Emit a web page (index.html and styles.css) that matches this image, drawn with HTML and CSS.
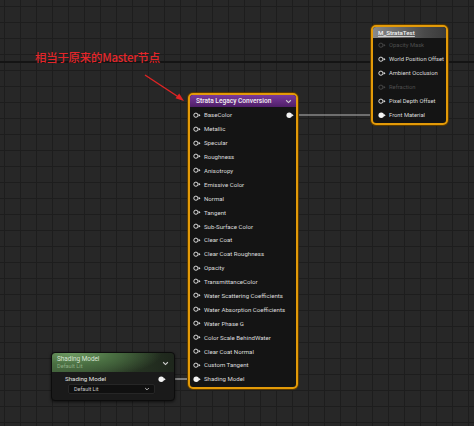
FILE: index.html
```html
<!DOCTYPE html>
<html>
<head>
<meta charset="utf-8">
<link rel="stylesheet" href="styles.css">
</head>
<body>
<svg class="defs" width="0" height="0">
  <defs>
    <symbol id="pin-o" viewBox="0 0 10 8">
      <circle cx="3.6" cy="4" r="2.6" fill="none" stroke="#e6e6e6" stroke-width="1.2"/>
      <path d="M7 2.2 L9.4 4 L7 5.8 Z" fill="#e6e6e6"/>
    </symbol>
    <symbol id="pin-dim" viewBox="0 0 10 8">
      <circle cx="3.6" cy="4" r="2.6" fill="none" stroke="#4a4a4a" stroke-width="1.2"/>
      <path d="M7 2.2 L9.4 4 L7 5.8 Z" fill="#4a4a4a"/>
    </symbol>
    <symbol id="pin-f" viewBox="0 0 10 8">
      <circle cx="4" cy="4" r="3.4" fill="#f4f4f4"/>
      <path d="M7 2.2 L9.6 4 L7 5.8 Z" fill="#f4f4f4"/>
    </symbol>
    <symbol id="chev" viewBox="0 0 8 6">
      <path d="M1.2 1.5 L4 4.3 L6.8 1.5" fill="none" stroke="#d0d0d0" stroke-width="1.3"/>
    </symbol>
  </defs>
</svg>

<div class="canvas">
  <svg class="wires" width="474" height="426">
    <line x1="290" y1="115" x2="382" y2="115" stroke="#b8b8b8" stroke-width="1.2"/>
    <line x1="168" y1="379" x2="192" y2="379" stroke="#b8b8b8" stroke-width="1.2"/>
    <line x1="145" y1="75" x2="180" y2="98" stroke="#e02424" stroke-width="1.4"/>
    <path d="M184 101 L175.5 98.2 L179.2 93.6 Z" fill="#e02424"/>
  </svg>

  <div class="note">相当于原来的Master节点</div>

  <div class="node node-main">
    <div class="head head-purple">
      <span class="title">Strata Legacy Conversion</span>
      <svg class="chev"><use href="#chev"/></svg>
    </div>
    <div class="rows rows-main">
      <div class="row"><svg class="pin"><use href="#pin-o"/></svg><span>BaseColor</span><svg class="pin pin-out"><use href="#pin-f"/></svg></div>
      <div class="row"><svg class="pin"><use href="#pin-o"/></svg><span>Metallic</span></div>
      <div class="row"><svg class="pin"><use href="#pin-o"/></svg><span>Specular</span></div>
      <div class="row"><svg class="pin"><use href="#pin-o"/></svg><span>Roughness</span></div>
      <div class="row"><svg class="pin"><use href="#pin-o"/></svg><span>Anisotropy</span></div>
      <div class="row"><svg class="pin"><use href="#pin-o"/></svg><span>Emissive Color</span></div>
      <div class="row"><svg class="pin"><use href="#pin-o"/></svg><span>Normal</span></div>
      <div class="row"><svg class="pin"><use href="#pin-o"/></svg><span>Tangent</span></div>
      <div class="row"><svg class="pin"><use href="#pin-o"/></svg><span>Sub-Surface Color</span></div>
      <div class="row"><svg class="pin"><use href="#pin-o"/></svg><span>Clear Coat</span></div>
      <div class="row"><svg class="pin"><use href="#pin-o"/></svg><span>Clear Coat Roughness</span></div>
      <div class="row"><svg class="pin"><use href="#pin-o"/></svg><span>Opacity</span></div>
      <div class="row"><svg class="pin"><use href="#pin-o"/></svg><span>TransmittanceColor</span></div>
      <div class="row"><svg class="pin"><use href="#pin-o"/></svg><span>Water Scattering Coefficients</span></div>
      <div class="row"><svg class="pin"><use href="#pin-o"/></svg><span>Water Absorption Coefficients</span></div>
      <div class="row"><svg class="pin"><use href="#pin-o"/></svg><span>Water Phase G</span></div>
      <div class="row"><svg class="pin"><use href="#pin-o"/></svg><span>Color Scale BehindWater</span></div>
      <div class="row"><svg class="pin"><use href="#pin-o"/></svg><span>Clear Coat Normal</span></div>
      <div class="row"><svg class="pin"><use href="#pin-o"/></svg><span>Custom Tangent</span></div>
      <div class="row"><svg class="pin"><use href="#pin-f"/></svg><span>Shading Model</span></div>
    </div>
  </div>

  <div class="node node-out">
    <div class="head head-grey">
      <span class="title title-ul">M_StrataTest</span>
    </div>
    <div class="rows rows-out">
      <div class="row dim"><svg class="pin"><use href="#pin-dim"/></svg><span>Opacity Mask</span></div>
      <div class="row"><svg class="pin"><use href="#pin-o"/></svg><span>World Position Offset</span></div>
      <div class="row"><svg class="pin"><use href="#pin-o"/></svg><span>Ambient Occlusion</span></div>
      <div class="row dim"><svg class="pin"><use href="#pin-dim"/></svg><span>Refraction</span></div>
      <div class="row"><svg class="pin"><use href="#pin-o"/></svg><span>Pixel Depth Offset</span></div>
      <div class="row"><svg class="pin"><use href="#pin-f"/></svg><span>Front Material</span></div>
    </div>
  </div>

  <div class="node node-sm">
    <div class="head head-green">
      <div class="sm-titles">
        <span class="sm-title">Shading Model</span>
        <span class="sm-sub">Default Lit</span>
      </div>
      <svg class="chev chev-sm"><use href="#chev"/></svg>
    </div>
    <div class="sm-body">
      <div class="sm-row">
        <span class="sm-label">Shading Model</span>
        <svg class="pin pin-sm"><use href="#pin-f"/></svg>
      </div>
      <div class="select">
        <span>Default Lit</span>
        <svg class="chev chev-sel"><use href="#chev"/></svg>
      </div>
    </div>
  </div>
</div>
</body>
</html>
```

FILE: styles.css
```css
html, body {
  margin: 0;
  padding: 0;
}
body {
  width: 474px;
  height: 426px;
  overflow: hidden;
  font-family: Roboto, "Noto Sans", "Liberation Sans", sans-serif;
}
.defs {
  position: absolute;
}
.canvas {
  position: relative;
  width: 474px;
  height: 426px;
  background-color: #272727;
  background-image:
    linear-gradient(to bottom, transparent 61px, #141414 61px, #141414 63px, transparent 63px),
    linear-gradient(to bottom, #1d1d1d 1px, transparent 1px),
    linear-gradient(to right, #1d1d1d 1px, transparent 1px);
  background-size: 100% 100%, 16px 16px, 16px 16px;
  background-repeat: no-repeat, repeat, repeat;
  background-position: 0 0, 0 6px, 4px 0;
}
.wires {
  position: absolute;
  left: 0;
  top: 0;
}
.note {
  position: absolute;
  left: 35px;
  top: 49px;
  font-family: "Noto Sans CJK SC", "Noto Sans", sans-serif;
  font-size: 11.4px;
  font-weight: 500;
  line-height: 16px;
  color: #e3262a;
  letter-spacing: -0.2px;
}
.node {
  position: absolute;
  box-sizing: border-box;
  background: #141414;
  border-radius: 5px;
}
.node-main {
  left: 188px;
  top: 93px;
  width: 110px;
  height: 296px;
  border: 2px solid #e39a08;
  box-shadow: 0 0 0 1px #5a3a00;
}
.node-out {
  left: 371px;
  top: 25px;
  width: 77px;
  height: 100px;
  border: 2px solid #e39a08;
  box-shadow: 0 0 0 1px #5a3a00;
}
.head {
  display: flex;
  align-items: center;
  justify-content: space-between;
  border-radius: 3px 3px 0 0;
}
.head-purple {
  height: 12px;
  padding: 0 4px 0 6px;
  background: linear-gradient(to bottom, #7b3a9c, #4f1f68);
}
.head-grey {
  height: 11px;
  padding: 0 4px 0 5px;
  background: linear-gradient(to right, #8a8a8a, #4a4a4a 70%, #3a3a3a);
}
.title {
  color: #f2f2f2;
  font-size: 6.6px;
  font-weight: 500;
  white-space: nowrap;
}
.title-ul {
  font-size: 6.2px;
  text-decoration: underline;
  text-decoration-color: #cfcfcf;
}
.chev {
  width: 7px;
  height: 5px;
}
.rows {
  display: flex;
  flex-direction: column;
}
.rows-main {
  padding-top: 1px;
}
.row {
  display: flex;
  align-items: center;
  height: 13.9px;
  color: #dcdcdc;
  font-size: 6.1px;
  white-space: nowrap;
}
.rows-out .row {
  height: 14px;
  font-size: 5.8px;
}
.row.dim {
  color: #4e4e4e;
}
.pin {
  width: 8px;
  height: 6.4px;
  margin: 0 3px 0 3px;
  flex: none;
}
.rows-out .pin {
  margin-left: 5px;
}
.pin-out {
  margin-left: auto;
  margin-right: 2px;
}
.node-sm {
  left: 51px;
  top: 352px;
  width: 124px;
  height: 49px;
  background: #1a1a1a;
  border: 1px solid #0c0c0c;
  border-radius: 4px;
  box-shadow: 0 1px 3px rgba(0,0,0,0.6);
  overflow: hidden;
}
.head-green {
  height: 19px;
  padding: 0 5px 0 5px;
  border-radius: 3px 3px 0 0;
  background:
    radial-gradient(ellipse 90px 26px at 20px 0px, #6f9c63 0%, #4a6f42 45%, transparent 100%),
    linear-gradient(to right, #3e5a38, #283724 60%, #1e261c);
}
.sm-titles {
  display: flex;
  flex-direction: column;
  line-height: 7px;
}
.sm-title {
  font-size: 6.4px;
  color: #d8e4d4;
}
.sm-sub {
  font-size: 5.6px;
  color: #8fae86;
}
.chev-sm {
  margin-top: 2px;
}
.sm-body {
  padding: 2px 8px 0 13px;
}
.sm-row {
  display: flex;
  align-items: center;
  justify-content: space-between;
  height: 10px;
}
.sm-label {
  font-size: 6.2px;
  color: #e4e4e4;
}
.pin-sm {
  margin: 0;
}
.select {
  display: flex;
  align-items: center;
  justify-content: space-between;
  box-sizing: border-box;
  width: 87px;
  height: 10px;
  margin-left: 3px;
  padding: 0 4px 0 5px;
  background: #101010;
  border: 1px solid #262626;
  border-radius: 2px;
  font-size: 5.4px;
  color: #c8c8c8;
}
.chev-sel {
  width: 6px;
  height: 4px;
}
```
